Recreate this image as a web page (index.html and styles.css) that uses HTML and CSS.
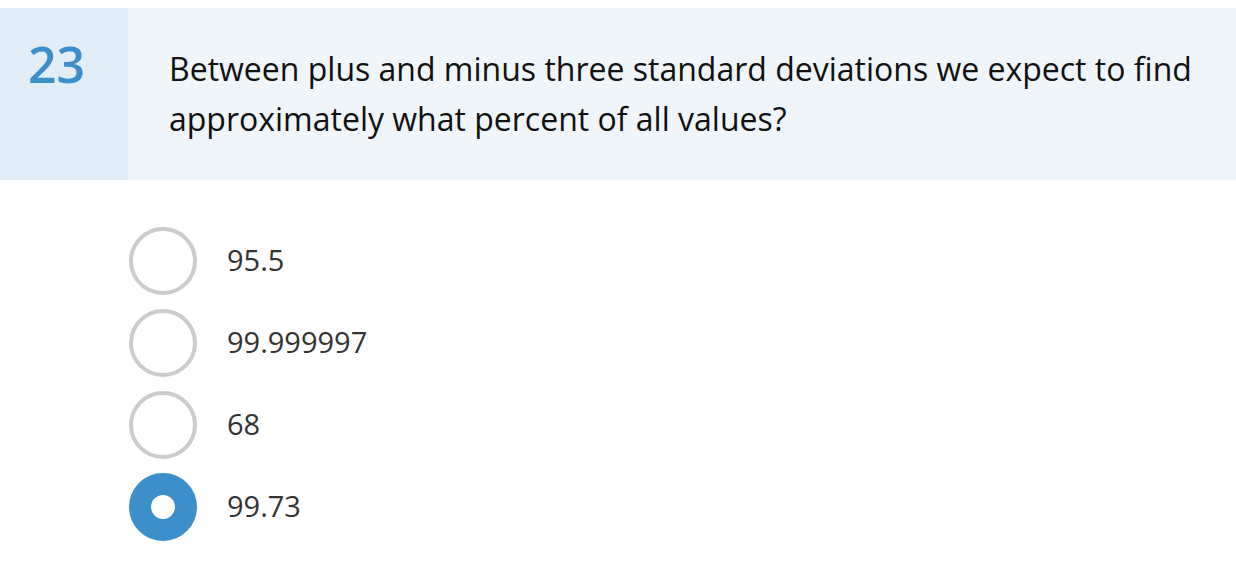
FILE: index.html
```html
<!DOCTYPE html>
<html>
<head>
<meta charset="utf-8">
<link rel="stylesheet" href="styles.css">
</head>
<body>
<div class="question">
  <div class="qnum">23</div>
  <div class="qtext">Between plus and minus three standard deviations we expect to find approximately what percent of all values?</div>
</div>
<div class="options">
  <label class="option"><span class="radio"></span><span class="label">95.5</span></label>
  <label class="option"><span class="radio"></span><span class="label">99.999997</span></label>
  <label class="option"><span class="radio"></span><span class="label">68</span></label>
  <label class="option"><span class="radio checked"></span><span class="label">99.73</span></label>
</div>
</body>
</html>
```
FILE: styles.css
```css
html, body {
  margin: 0;
  padding: 0;
  background: #ffffff;
  font-family: "Open Sans", "Noto Sans", sans-serif;
}
.question {
  margin-top: 8px;
  display: flex;
  height: 172px;
  background: #f0f5fa;
}
.qnum {
  width: 128px;
  flex: none;
  background: #e2eef7;
  color: #3d8fcc;
  font-size: 50px;
  font-weight: 600;
  line-height: 50px;
  padding: 31px 0 0 28px;
  box-sizing: border-box;
}
.qtext {
  padding: 36px 30px 0 41px;
  font-size: 32px;
  line-height: 50px;
  color: #111111;
}
.options {
  padding: 227px 0 0 129px;
  padding-top: 47px;
  display: flex;
  flex-direction: column;
  gap: 14px;
}
.option {
  display: flex;
  align-items: center;
  height: 68px;
}
.radio {
  width: 68px;
  height: 68px;
  box-sizing: border-box;
  border: 4px solid #cccccc;
  border-radius: 50%;
  flex: none;
  display: flex;
  align-items: center;
  justify-content: center;
}
.radio.checked {
  background: #3d8fcc;
  border-color: #3d8fcc;
}
.radio.checked::after {
  content: "";
  width: 24px;
  height: 24px;
  border-radius: 50%;
  background: #ffffff;
}
.label {
  margin-left: 30px;
  margin-bottom: 3px;
  font-size: 29px;
  color: #333333;
}
```
